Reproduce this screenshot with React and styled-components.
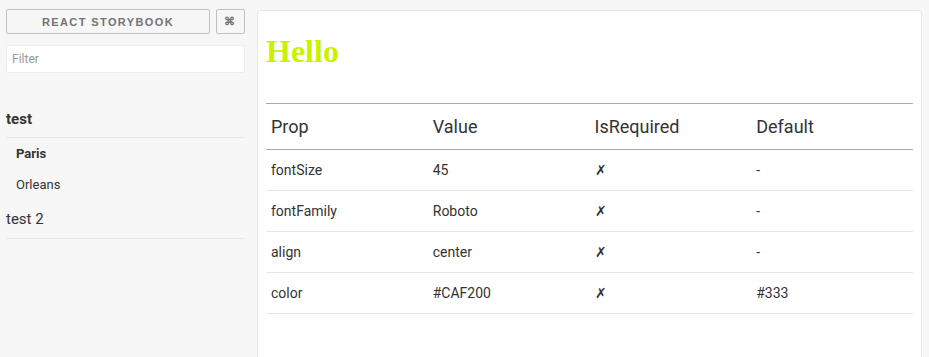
import React from 'react';
import styled, { createGlobalStyle } from 'styled-components';

const GlobalStyle = createGlobalStyle`
  html, body {
    margin: 0;
    padding: 0;
    background: #f7f7f7;
    font-family: Roboto, "Liberation Sans", sans-serif;
  }
`;

const Layout = styled.div`
  display: flex;
  height: 357px;
  overflow: hidden;
`;

const Sidebar = styled.div`
  width: 239px;
  flex-shrink: 0;
  padding: 9px 0 0 6px;
`;

const Header = styled.div`
  display: flex;
  gap: 6px;
`;

const HeaderButton = styled.div`
  flex: ${(p) => (p.grow ? 1 : '0 0 auto')};
  width: ${(p) => (p.grow ? 'auto' : '27px')};
  height: 23px;
  border: 1px solid #c1c1c1;
  border-radius: 2px;
  display: flex;
  align-items: center;
  justify-content: center;
  color: #737373;
  font-family: "Liberation Sans", Arial, sans-serif;
  font-weight: bold;
  font-size: 11px;
  letter-spacing: 1.4px;
`;

const Filter = styled.input`
  box-sizing: border-box;
  margin-top: 11px;
  width: 100%;
  height: 28px;
  border: 1px solid #ececec;
  border-radius: 2px;
  background: #fff;
  padding: 0 5px;
  font-family: Roboto, sans-serif;
  font-size: 12px;
  color: #333;
  outline: none;
  &::placeholder {
    color: #999;
  }
`;

const Tree = styled.div`
  margin-top: 29px;
`;

const Kind = styled.div`
  font-size: 15px;
  font-weight: ${(p) => (p.active ? 700 : 400)};
  color: #333;
  padding: ${(p) => (p.first ? '8px 0 9px' : '2px 0 10px')};
  border-bottom: 1px solid #eaeaea;
`;

const StoryList = styled.div`
  padding: 1px 0 7px;
`;

const Story = styled.div`
  font-size: 13px;
  font-weight: ${(p) => (p.active ? 700 : 400)};
  color: #333;
  padding: 7px 0 9px 10px;
`;

const Preview = styled.div`
  flex: 1;
  margin: 10px 7px 0 12px;
  min-height: 400px;
  background: #fff;
  border: 1px solid #e6e6e6;
  border-radius: 4px;
  padding: 0 8px;
`;

const Hello = styled.h1`
  margin: 22px 0 34px;
  font-family: "Liberation Serif", "Times New Roman", serif;
  font-weight: bold;
  font-size: 32px;
  line-height: 36px;
  color: #caf200;
`;

const Table = styled.table`
  width: 100%;
  border-collapse: collapse;
  table-layout: fixed;
  color: #333;

  th {
    text-align: left;
    font-weight: 400;
    font-size: 18px;
    height: 45px;
    padding: 0 5px;
    border-top: 1px solid #aaa;
    border-bottom: 1px solid #aaa;
  }

  td {
    font-size: 14px;
    height: 40px;
    padding: 0 5px;
    border-bottom: 1px solid #e6e6e6;
  }
`;

const rows = [
  { prop: 'fontSize', value: '45', def: '-' },
  { prop: 'fontFamily', value: 'Roboto', def: '-' },
  { prop: 'align', value: 'center', def: '-' },
  { prop: 'color', value: '#CAF200', def: '#333' },
];

const App = () => (
  <>
    <GlobalStyle />
    <Layout>
      <Sidebar>
        <Header>
          <HeaderButton grow>REACT STORYBOOK</HeaderButton>
          <HeaderButton>⌘</HeaderButton>
        </Header>
        <Filter placeholder="Filter" />
        <Tree>
          <Kind active first>test</Kind>
          <StoryList>
            <Story active>Paris</Story>
            <Story>Orleans</Story>
          </StoryList>
          <Kind>test 2</Kind>
        </Tree>
      </Sidebar>
      <Preview>
        <Hello>Hello</Hello>
        <Table>
          <thead>
            <tr>
              <th>Prop</th>
              <th>Value</th>
              <th>IsRequired</th>
              <th>Default</th>
            </tr>
          </thead>
          <tbody>
            {rows.map((r) => (
              <tr key={r.prop}>
                <td>{r.prop}</td>
                <td>{r.value}</td>
                <td>✗</td>
                <td>{r.def}</td>
              </tr>
            ))}
          </tbody>
        </Table>
      </Preview>
    </Layout>
  </>
);

export default App;
